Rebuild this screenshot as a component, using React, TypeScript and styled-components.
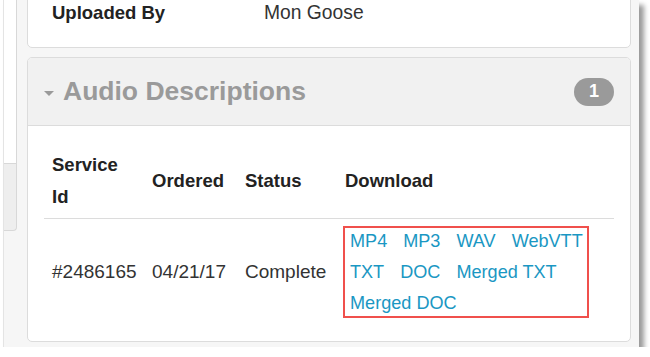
import styled, { createGlobalStyle } from "styled-components";

const GlobalStyle = createGlobalStyle`
  html, body {
    margin: 0;
    padding: 0;
    background: #ffffff;
  }
  body {
    font-family: "Liberation Sans", Arial, Helvetica, sans-serif;
    color: #2b2b2b;
  }
`;

const Window = styled.div`
  margin-left: 3px;
  width: 636px;
  height: 347px;
  display: flex;
  overflow: hidden;
  background: #f6f6f6;
  box-shadow: 5px 5px 5px rgba(0, 0, 0, 0.4);
`;

const Sidebar = styled.div`
  width: 14px;
  flex-shrink: 0;
  border-left: 1px solid #e4e4e4;
  box-sizing: border-box;
`;

const SideBlock = styled.div<{ $tone: "white" | "gray"; $h: number; $last?: boolean }>`
  height: ${(p) => p.$h}px;
  background: ${(p) => (p.$tone === "white" ? "#ffffff" : "#eeeeee")};
  border-right: 1px solid #d8d8d8;
  border-bottom: 1px solid #d8d8d8;
  border-bottom-right-radius: ${(p) => (p.$last ? "4px" : "0")};
`;

const Main = styled.div`
  flex: 1;
  display: flex;
  flex-direction: column;
  gap: 9px;
  padding: 0 8px 0 10px;
`;

const InfoCard = styled.div`
  margin-top: -40px;
  padding: 36px 24px 18px;
  background: #ffffff;
  border: 1px solid #dcdcdc;
  border-radius: 5px;
  display: flex;
  line-height: 32px;
`;

const InfoLabel = styled.div`
  width: 212px;
  font-size: 18.5px;
  font-weight: bold;
  color: #222;
`;

const InfoValue = styled.div`
  font-size: 19.3px;
  color: #333;
`;

const Panel = styled.div`
  background: #ffffff;
  border: 1px solid #dcdcdc;
  border-radius: 5px;
  overflow: hidden;
`;

const PanelHeader = styled.div`
  height: 67px;
  display: flex;
  align-items: center;
  padding: 0 16px;
  background: #f1f1f1;
  border-bottom: 1px solid #dcdcdc;
`;

const Caret = styled.span`
  width: 0;
  height: 0;
  border-left: 5px solid transparent;
  border-right: 5px solid transparent;
  border-top: 5px solid #9a9a9a;
  margin: 4px 9px 0 0;
`;

const PanelTitle = styled.h2`
  margin: 0;
  font-size: 26.5px;
  font-weight: bold;
  color: #9a9a9a;
`;

const Badge = styled.span`
  margin-left: auto;
  width: 40px;
  height: 28px;
  border-radius: 14px;
  background: #9a9a9a;
  color: #ffffff;
  font-size: 18px;
  font-weight: bold;
  display: flex;
  align-items: center;
  justify-content: center;
`;

const PanelBody = styled.div`
  padding: 15px 16px 16px;
`;

const Table = styled.table`
  width: 100%;
  border-collapse: collapse;
  table-layout: fixed;
`;

const Th = styled.th`
  text-align: left;
  vertical-align: middle;
  font-size: 18.5px;
  font-weight: bold;
  color: #222;
  line-height: 32px;
  padding: 8px 7px 5px 8px;
  border-bottom: 1px solid #dcdcdc;
`;

const Td = styled.td`
  vertical-align: middle;
  font-size: 19px;
  color: #333;
  padding: 7px 7px 7px 8px;
  white-space: nowrap;
`;

const Highlight = styled.div`
  margin-left: -2px;
  width: 246px;
  box-sizing: border-box;
  border: 2px solid #f0504c;
  padding: 0 0 0 5px;
  display: flex;
  flex-wrap: wrap;
  column-gap: 16px;
  row-gap: 5px;
`;

const FileLink = styled.a`
  font-size: 18.1px;
  line-height: 26px;
  color: #1a97c3;
  text-decoration: none;
  white-space: nowrap;
`;

const formats = ["MP4", "MP3", "WAV", "WebVTT", "TXT", "DOC", "Merged TXT", "Merged DOC"];

export default function App() {
  return (
    <>
      <GlobalStyle />
      <Window>
        <Sidebar>
          <SideBlock $tone="white" $h={163} />
          <SideBlock $tone="gray" $h={66} $last />
        </Sidebar>
        <Main>
          <InfoCard>
            <InfoLabel>Uploaded By</InfoLabel>
            <InfoValue>Mon Goose</InfoValue>
          </InfoCard>
          <Panel>
            <PanelHeader>
              <Caret />
              <PanelTitle>Audio Descriptions</PanelTitle>
              <Badge>1</Badge>
            </PanelHeader>
            <PanelBody>
              <Table>
                <colgroup>
                  <col style={{ width: 100 }} />
                  <col style={{ width: 93 }} />
                  <col style={{ width: 100 }} />
                  <col />
                </colgroup>
                <thead>
                  <tr>
                    <Th>Service Id</Th>
                    <Th>Ordered</Th>
                    <Th>Status</Th>
                    <Th>Download</Th>
                  </tr>
                </thead>
                <tbody>
                  <tr>
                    <Td>#2486165</Td>
                    <Td>04/21/17</Td>
                    <Td>Complete</Td>
                    <Td>
                      <Highlight>
                        {formats.map((f) => (
                          <FileLink key={f} href="#">
                            {f}
                          </FileLink>
                        ))}
                      </Highlight>
                    </Td>
                  </tr>
                </tbody>
              </Table>
            </PanelBody>
          </Panel>
        </Main>
      </Window>
    </>
  );
}
